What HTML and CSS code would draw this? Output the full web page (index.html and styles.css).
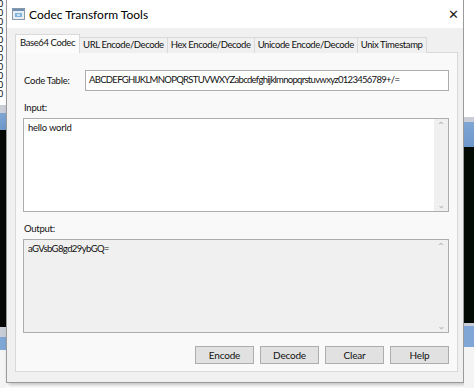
FILE: index.html
```html
<!DOCTYPE html>
<html lang="en">
<head>
  <meta charset="UTF-8">
  <title>Codec Transform Tools</title>
  <link rel="stylesheet" href="styles.css">
</head>
<body>
  <div class="desk desk-left">
    <div class="desk-text">O<br>O<br>O<br>O<br>O<br>O<br>O<br>O<br>O<br>O<br>O</div>
  </div>

  <div class="window">
    <div class="titlebar">
      <svg class="app-icon" width="13" height="12" viewBox="0 0 13 12">
        <rect x="0.5" y="0.5" width="12" height="11" fill="#e8eef4" stroke="#8a99a8"/>
        <rect x="1" y="1" width="11" height="2" fill="#6f8fb3"/>
        <rect x="3" y="5" width="7" height="4" fill="#7fb3d9"/>
        <rect x="5" y="6" width="3" height="2" fill="#c9e1f2"/>
      </svg>
      <span class="title">Codec Transform Tools</span>
      <span class="close">&#x2715;</span>
    </div>

    <div class="client">
      <ul class="tabs">
        <li class="tab active">Base64 Codec</li>
        <li class="tab">URL Encode/Decode</li>
        <li class="tab">Hex Encode/Decode</li>
        <li class="tab">Unicode Encode/Decode</li>
        <li class="tab">Unix Timestamp</li>
      </ul>

      <div class="panel">
        <div class="row-table">
          <label class="lbl">Code Table:</label>
          <div class="field">ABCDEFGHIJKLMNOPQRSTUVWXYZabcdefghijklmnopqrstuvwxyz0123456789+/=</div>
        </div>

        <div class="lbl lbl-block">Input:</div>
        <div class="area area-input">
          <div class="area-text">hello world</div>
          <div class="vscroll">
            <span class="arrow">&#x2303;</span>
            <span class="arrow down">&#x2303;</span>
          </div>
        </div>

        <div class="lbl lbl-block">Output:</div>
        <div class="area area-output">
          <div class="area-text area-code">aGVsbG8gd29ybGQ=</div>
          <div class="vscroll">
            <span class="arrow">&#x2303;</span>
            <span class="arrow down">&#x2303;</span>
          </div>
        </div>

        <div class="buttons">
          <button class="btn">Encode</button>
          <button class="btn">Decode</button>
          <button class="btn">Clear</button>
          <button class="btn">Help</button>
        </div>
      </div>
    </div>
  </div>

  <div class="desk desk-right"></div>
</body>
</html>
```

FILE: styles.css
```css
/* Ventana estilo Windows 10 */
body {
  margin: 0;
  padding: 0;
  display: flex;
  height: 388px;
  overflow: hidden;
  background-color: #ffffff;
  font-family: Lato, 'Open Sans', sans-serif;
  font-size: 9.5px;
  letter-spacing: -0.25px;
  color: #111;
}

.desk {
  height: 388px;
  flex: none;
}

.desk-left {
  width: 6px;
  overflow: hidden;
  background: linear-gradient(to bottom,
    #ffffff 0, #ffffff 105px,
    #c9ced6 105px, #c9ced6 113px,
    #7fa6d4 113px, #6d97cb 130px,
    #050805 130px, #050805 327px,
    #c9ced6 327px, #c9ced6 337px,
    #7fa6d4 337px, #7fa6d4 350px,
    #f4f4f4 350px);
}

.desk-text {
  font-family: 'DejaVu Sans Mono', monospace;
  font-size: 9px;
  line-height: 9px;
  letter-spacing: 0;
  color: #222;
  margin-left: -2px;
}

.desk-right {
  flex: 1;
  background: linear-gradient(to bottom,
    #ffffff 0, #ffffff 117px,
    #c9ced6 117px, #c9ced6 122px,
    #7fa6d4 122px, #6d97cb 147px,
    #030903 147px, #030903 323px,
    #c9ced6 323px, #c9ced6 326px,
    #7fa6d4 326px, #7fa6d4 347px,
    #f4f4f4 347px);
}

.window {
  width: 456px;
  height: 382px;
  flex: none;
  display: flex;
  flex-direction: column;
  border: 1px solid #9a9a9a;
  border-top: none;
  box-shadow: 2px 2px 4px rgba(0, 0, 0, 0.25);
  background-color: #f0f0f0;
}

.titlebar {
  height: 28px;
  display: flex;
  align-items: center;
  background-color: #ffffff;
  padding: 0 0 0 5px;
}

.app-icon {
  margin-right: 4px;
}

.title {
  font-size: 12px;
  letter-spacing: 0;
  color: #000;
  flex: 1;
}

.close {
  width: 20px;
  text-align: center;
  font-size: 13px;
  letter-spacing: 0;
  color: #222;
}

.client {
  flex: 1;
  display: flex;
  flex-direction: column;
  padding: 8px 5px 10px 8px;
}

.tabs {
  list-style: none;
  margin: 0 0 -1px 0;
  padding: 0;
  display: flex;
  align-items: flex-end;
  height: 17px;
  position: relative;
  z-index: 1;
}

.tab {
  height: 15px;
  line-height: 14px;
  padding: 0 3px 0 3px;
  letter-spacing: -0.4px;
  border: 1px solid #d9d9d9;
  border-bottom: none;
  border-left: none;
  background-color: #f0f0f0;
  white-space: nowrap;
}

.tab.active {
  height: 18px;
  line-height: 16px;
  padding: 0 4px;
  border-left: 1px solid #d9d9d9;
  background-color: #fcfcfc;
}

.panel {
  flex: 1;
  border: 1px solid #d9d9d9;
  background-color: #f9f9f9;
  padding: 17px 8px 7px 7px;
  display: flex;
  flex-direction: column;
}

.row-table {
  display: flex;
  align-items: center;
  margin-bottom: 9px;
}

.row-table .lbl {
  width: 61px;
  padding-left: 1px;
  flex: none;
}

.field {
  flex: 1;
  min-width: 0;
  height: 19px;
  line-height: 18px;
  border: 1px solid #adadad;
  background-color: #ffffff;
  padding-left: 3px;
  letter-spacing: -0.7px;
  white-space: nowrap;
  overflow: hidden;
}

.lbl-block {
  height: 16px;
  line-height: 16px;
  margin-bottom: 2px;
  padding-left: 1px;
}

.area {
  display: flex;
  border: 1px solid #adadad;
}

.area-input {
  height: 92px;
  background-color: #ffffff;
  margin-bottom: 9px;
}

.area-output {
  height: 92px;
  background-color: #f0f0f0;
  margin-bottom: 13px;
}

.area-text {
  flex: 1;
  padding: 2px 4px;
  line-height: 14px;
}

.area-code {
  letter-spacing: -0.6px;
}

.vscroll {
  width: 14px;
  background-color: #f0f0f0;
  display: flex;
  flex-direction: column;
  justify-content: space-between;
  align-items: center;
}

.arrow {
  font-family: 'DejaVu Sans', sans-serif;
  font-size: 10px;
  letter-spacing: 0;
  color: #b8b8b8;
  line-height: 14px;
}

.arrow.down {
  transform: rotate(180deg);
}

.buttons {
  display: flex;
  justify-content: flex-end;
  gap: 6px;
}

.btn {
  width: 59px;
  height: 18px;
  padding: 0;
  font-family: Lato, 'Open Sans', sans-serif;
  font-size: 10px;
  letter-spacing: -0.2px;
  color: #111;
  background-color: #e1e1e1;
  border: 1px solid #adadad;
}
```
